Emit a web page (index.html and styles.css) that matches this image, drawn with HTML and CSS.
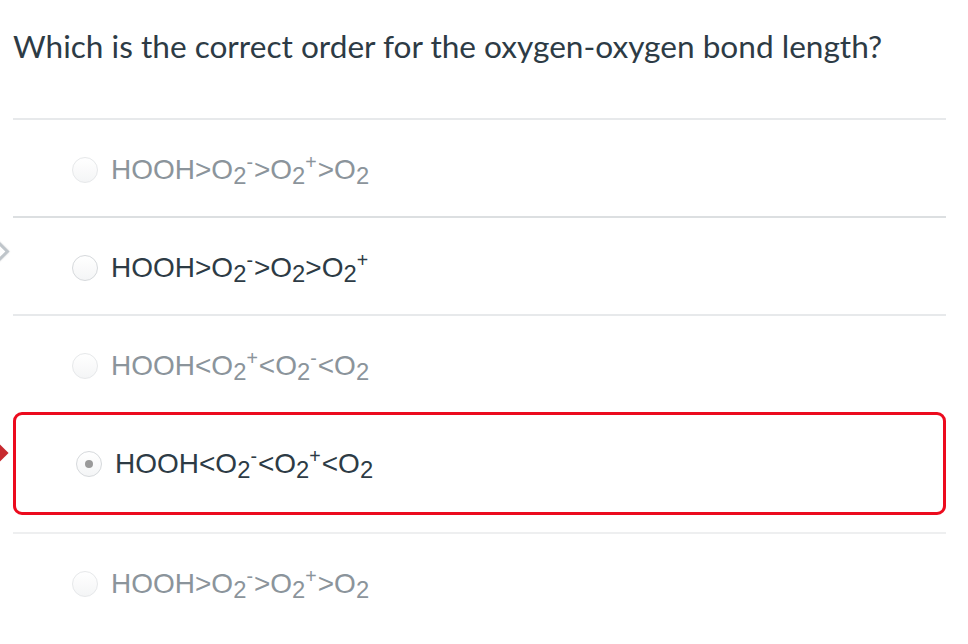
FILE: index.html
```html
<!DOCTYPE html>
<html>
<head>
<meta charset="utf-8">
<link rel="stylesheet" href="styles.css">
</head>
<body>
<div class="quiz">
  <h1 class="question">Which is the correct order for the oxygen-oxygen bond length?</h1>
  <div class="answers">
    <div class="answer faded">
      <span class="radio"></span>
      <span class="label">HOOH&gt;O<sub>2</sub><sup>-</sup>&gt;O<sub>2</sub><sup>+</sup>&gt;O<sub>2</sub></span>
    </div>
    <div class="answer">
      <span class="arrow arrow-correct"></span>
      <span class="radio"></span>
      <span class="label">HOOH&gt;O<sub>2</sub><sup>-</sup>&gt;O<sub>2</sub>&gt;O<sub>2</sub><sup>+</sup></span>
    </div>
    <div class="answer faded">
      <span class="radio"></span>
      <span class="label">HOOH&lt;O<sub>2</sub><sup>+</sup>&lt;O<sub>2</sub><sup>-</sup>&lt;O<sub>2</sub></span>
    </div>
    <div class="answer selected">
      <span class="arrow arrow-wrong"></span>
      <span class="radio checked"></span>
      <span class="label">HOOH&lt;O<sub>2</sub><sup>-</sup>&lt;O<sub>2</sub><sup>+</sup>&lt;O<sub>2</sub></span>
    </div>
    <div class="answer faded">
      <span class="radio"></span>
      <span class="label">HOOH&gt;O<sub>2</sub><sup>-</sup>&gt;O<sub>2</sub><sup>+</sup>&gt;O<sub>2</sub></span>
    </div>
  </div>
</div>
</body>
</html>
```
FILE: styles.css
```css
html, body {
  margin: 0;
  padding: 0;
  background: #ffffff;
}
.quiz {
  padding: 0 22px 0 13px;
  color: #2d3b45;
  overflow: hidden;
  height: 644px;
  box-sizing: border-box;
}
.question {
  font-family: "Lato", "Liberation Sans", sans-serif;
  font-weight: 400;
  font-size: 31.6px;
  line-height: 38px;
  margin: 27px 0 0 0;
  color: #2d3b45;
}
.answers {
  margin-top: 53px;
}
.answer {
  position: relative;
  display: flex;
  align-items: center;
  height: 92px;
  border-top: 2px solid #e7e9eb;
  padding: 4px 0 0 59px;
  box-sizing: content-box;
  font-family: "Liberation Sans", Arial, sans-serif;
  font-size: 28px;
}
.answer:nth-child(2) {
  border-top-color: #dcdfe1;
}
.answer.selected {
  border: 3px solid #ec0b1e;
  border-radius: 9px;
  height: 97px;
  padding: 0 0 0 60px;
  margin-bottom: 17px;
}
.answer.selected + .answer {
  border-top-color: #eeeff0;
  padding-top: 4px;
}
.radio {
  width: 24px;
  height: 24px;
  border: 1px solid #d6d9dc;
  border-radius: 50%;
  background: linear-gradient(#ffffff, #f4f5f6);
  flex: none;
  margin-right: 13px;
  position: relative;
}
.radio.checked::after {
  content: "";
  position: absolute;
  left: 8px;
  top: 8px;
  width: 8px;
  height: 8px;
  border-radius: 50%;
  background: #9a9a9a;
}
.label {
  white-space: nowrap;
  line-height: 1;
}
.faded .label {
  color: #8b949b;
}
.faded .radio {
  border-color: #e6e8ea;
}
sub {
  font-size: 0.85em;
  vertical-align: -0.22em;
  line-height: 0;
}
sup {
  font-size: 0.7em;
  vertical-align: 0.5em;
  line-height: 0;
  padding-right: 1px;
}
.arrow {
  position: absolute;
  transform: rotate(45deg);
}
.arrow-correct {
  width: 21px;
  height: 21px;
  top: 20px;
  left: -36px;
  border: 3px solid #bfc5ca;
  background: #ffffff;
  box-shadow: 0 0 2px rgba(0, 0, 0, 0.15);
}
.arrow-wrong {
  width: 22px;
  height: 22px;
  top: 27px;
  left: -34px;
  background: #c72a2f;
}
```
